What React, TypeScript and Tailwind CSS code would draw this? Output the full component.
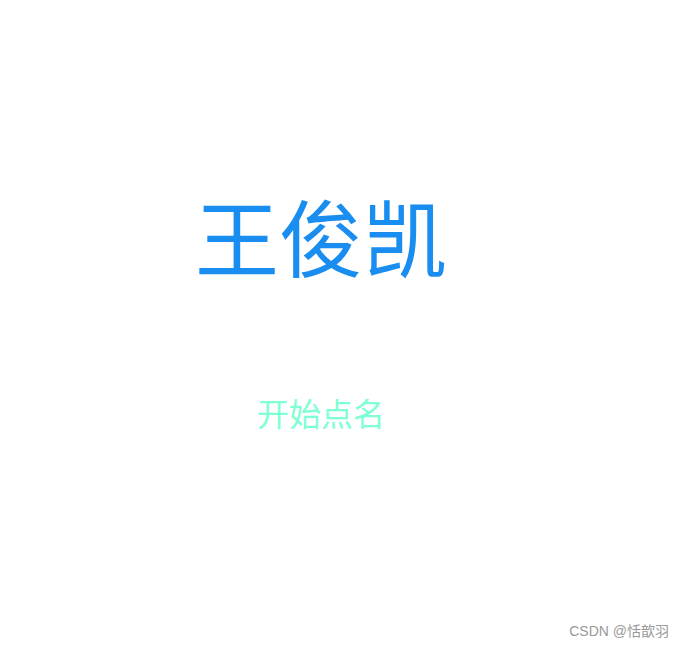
import React from "react";

const cjk = { fontFamily: '"Noto Sans CJK SC", "Noto Sans", sans-serif' };

export default function App() {
  return (
    <div className="relative w-[684px] h-[651px] bg-white overflow-hidden" style={cjk}>
      <div className="flex flex-col items-center w-[642px]">
        <div className="mt-[193px] text-[84px] leading-none text-[#1a8ef0]">王俊凯</div>
        <button className="mt-[119px] text-[32px] leading-none text-[#7fffd4] bg-transparent">开始点名</button>
      </div>
      <div
        className="absolute right-[15px] bottom-[9px] text-[14px] text-[#999999]"
        style={{ fontFamily: '"Liberation Sans", "Noto Sans CJK SC", sans-serif' }}
      >
        CSDN @恬歆羽
      </div>
    </div>
  );
}
